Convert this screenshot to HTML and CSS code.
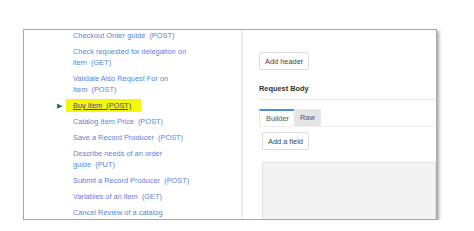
FILE: index.html
```html
<!DOCTYPE html>
<html lang="en">
<head>
  <meta charset="UTF-8">
  <title>REST API Explorer</title>
  <link rel="stylesheet" href="styles.css">
</head>
<body>
  <div class="frame">
    <div class="sidebar">
      <ul class="endpoints">
        <li><a href="#">Checkout Order guide&nbsp; (POST)</a></li>
        <li><a href="#">Check requested for delegation on<br>item&nbsp; (GET)</a></li>
        <li><a href="#">Validate Also Request For on<br>Item&nbsp; (POST)</a></li>
        <li class="active"><span class="marker">&#9654;</span><a href="#">Buy Item&nbsp; (POST)</a></li>
        <li><a href="#">Catalog Item Price&nbsp; (POST)</a></li>
        <li><a href="#">Save a Record Producer&nbsp; (POST)</a></li>
        <li><a href="#">Describe needs of an order<br>guide&nbsp; (PUT)</a></li>
        <li><a href="#">Submit a Record Producer&nbsp; (POST)</a></li>
        <li><a href="#">Variables of an item&nbsp; (GET)</a></li>
        <li><a href="#">Cancel Review of a catalog<br>item&nbsp; (POST)</a></li>
      </ul>
    </div>

    <div class="main">
      <button class="btn">Add header</button>
      <h3 class="section-title">Request Body</h3>
      <div class="tabs">
        <span class="tab selected">Builder</span>
        <span class="tab">Raw</span>
      </div>
      <div class="tab-body">
        <button class="btn">Add a field</button>
        <div class="body-box"></div>
      </div>
    </div>
  </div>
</body>
</html>
```

FILE: styles.css
```css
* {
  margin: 0;
  padding: 0;
  box-sizing: border-box;
}
html, body {
  background: #fff;
  font-family: 'Liberation Sans', Arial, sans-serif;
  font-size: 7.4px;
}
body {
  padding: 29px 0 0 23px;
}

/* window frame */
.frame {
  width: 414px;
  height: 191px;
  display: flex;
  border: 1px solid #a9a9a9;
  box-shadow: 2px 2px 3px rgba(0, 0, 0, 0.35);
  overflow: hidden;
  background: #fff;
}

/* endpoint list */
.sidebar {
  width: 219px;
  flex: none;
  border-right: 2px solid #ececec;
}
.endpoints {
  list-style: none;
  padding: 0 0 0 49px;
}
.endpoints li {
  position: relative;
  line-height: 11px;
  margin-bottom: 5px;
}
.endpoints a {
  color: #5a84dc;
  text-decoration: none;
}
.endpoints .active a {
  position: relative;
  z-index: 0;
  color: #2f4a9c;
  text-decoration: underline;
}
.endpoints .active a::before {
  content: '';
  position: absolute;
  top: -2px;
  bottom: -2px;
  left: -7px;
  right: -10px;
  background: #f4f70a;
  z-index: -1;
}
.marker {
  position: absolute;
  left: -16px;
  top: 0;
  font-size: 7px;
  color: #2c6a5b;
}

/* request panel */
.main {
  flex: 1;
  padding: 22px 0 0 16px;
  color: #444;
}
.btn {
  font-family: inherit;
  font-size: 7.4px;
  color: #444;
  background: #fff;
  border: 1px solid #dcdcdc;
  border-radius: 2px;
  height: 18px;
  padding: 0 5px;
}
.section-title {
  font-size: 7.4px;
  font-weight: bold;
  color: #333;
  margin-top: 14px;
  padding-bottom: 6px;
  border-bottom: 1px solid #e8e8e8;
}
.tabs {
  display: flex;
  margin-top: 9px;
  border-bottom: 1px solid #eeeeee;
}
.tab {
  height: 17px;
  line-height: 16px;
  padding: 0 6px;
  color: #555;
  background: #e4e4e4;
  border-top: 1px solid #e4e4e4;
}
.tab.selected {
  background: #fff;
  border-top: 2px solid #4b8fd6;
  border-left: 1px solid #e4e4e4;
  padding: 0 5px 0 6px;
}
.tab-body {
  padding: 5px 0 0 3px;
}
.body-box {
  margin-top: 12px;
  height: 80px;
  background: #f3f3f3;
  border: 1px solid #e2e2e2;
}
```
